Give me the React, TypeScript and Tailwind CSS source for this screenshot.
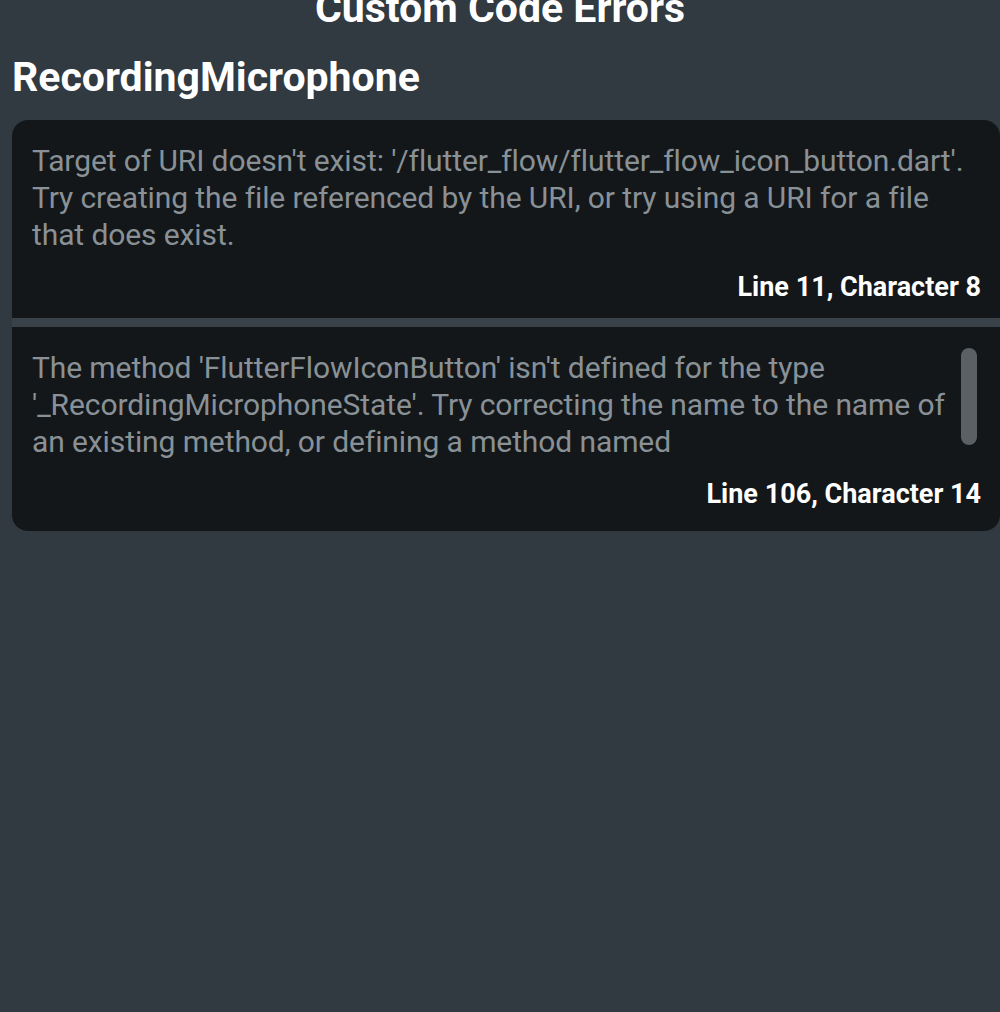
const errors = [
  {
    lines: [
      "Target of URI doesn't exist: '/flutter_flow/flutter_flow_icon_button.dart'.",
      "Try creating the file referenced by the URI, or try using a URI for a file",
      "that does exist.",
    ],
    location: "Line 11, Character 8",
    scroll: false,
  },
  {
    lines: [
      "The method 'FlutterFlowIconButton' isn't defined for the type",
      "'_RecordingMicrophoneState'. Try correcting the name to the name of",
      "an existing method, or defining a method named",
      "'FlutterFlowIconButton'.",
    ],
    location: "Line 106, Character 14",
    scroll: true,
  },
];

export default function App() {
  return (
    <main
      className="min-h-screen w-full overflow-hidden bg-[#313941] text-white"
      style={{ fontFamily: "Roboto, 'Liberation Sans', sans-serif" }}
    >
      <h1 className="-mt-3 text-center text-[41px] font-bold leading-none">Custom Code Errors</h1>

      <div className="pl-3">
        <h2 className="mt-[28px] text-[41px] font-bold leading-none">RecordingMicrophone</h2>

        <div className="mt-[22px] flex flex-col gap-[9px] overflow-hidden rounded-[16px] bg-[#3a4249]">
          {errors.map((err, i) => (
            <div
              key={i}
              className={`relative bg-[#131719] pl-5 pr-[19px] pt-[22px] ${
                i === errors.length - 1 ? "pb-[22px]" : "pb-4"
              }`}
            >
              <div className="h-[111px] overflow-hidden text-[30px] leading-[37px] tracking-[-0.1px] text-[#899197]">
                {err.lines.map((line, j) => (
                  <div key={j} className="whitespace-nowrap">
                    {line}
                  </div>
                ))}
              </div>
              {err.scroll && (
                <div className="absolute right-[23px] top-[21px] h-[97px] w-4 rounded-full bg-[#5b6065]" />
              )}
              <div className="mt-[19px] text-right text-[27px] font-bold leading-[30px]">
                {err.location}
              </div>
            </div>
          ))}
        </div>
      </div>
    </main>
  );
}
